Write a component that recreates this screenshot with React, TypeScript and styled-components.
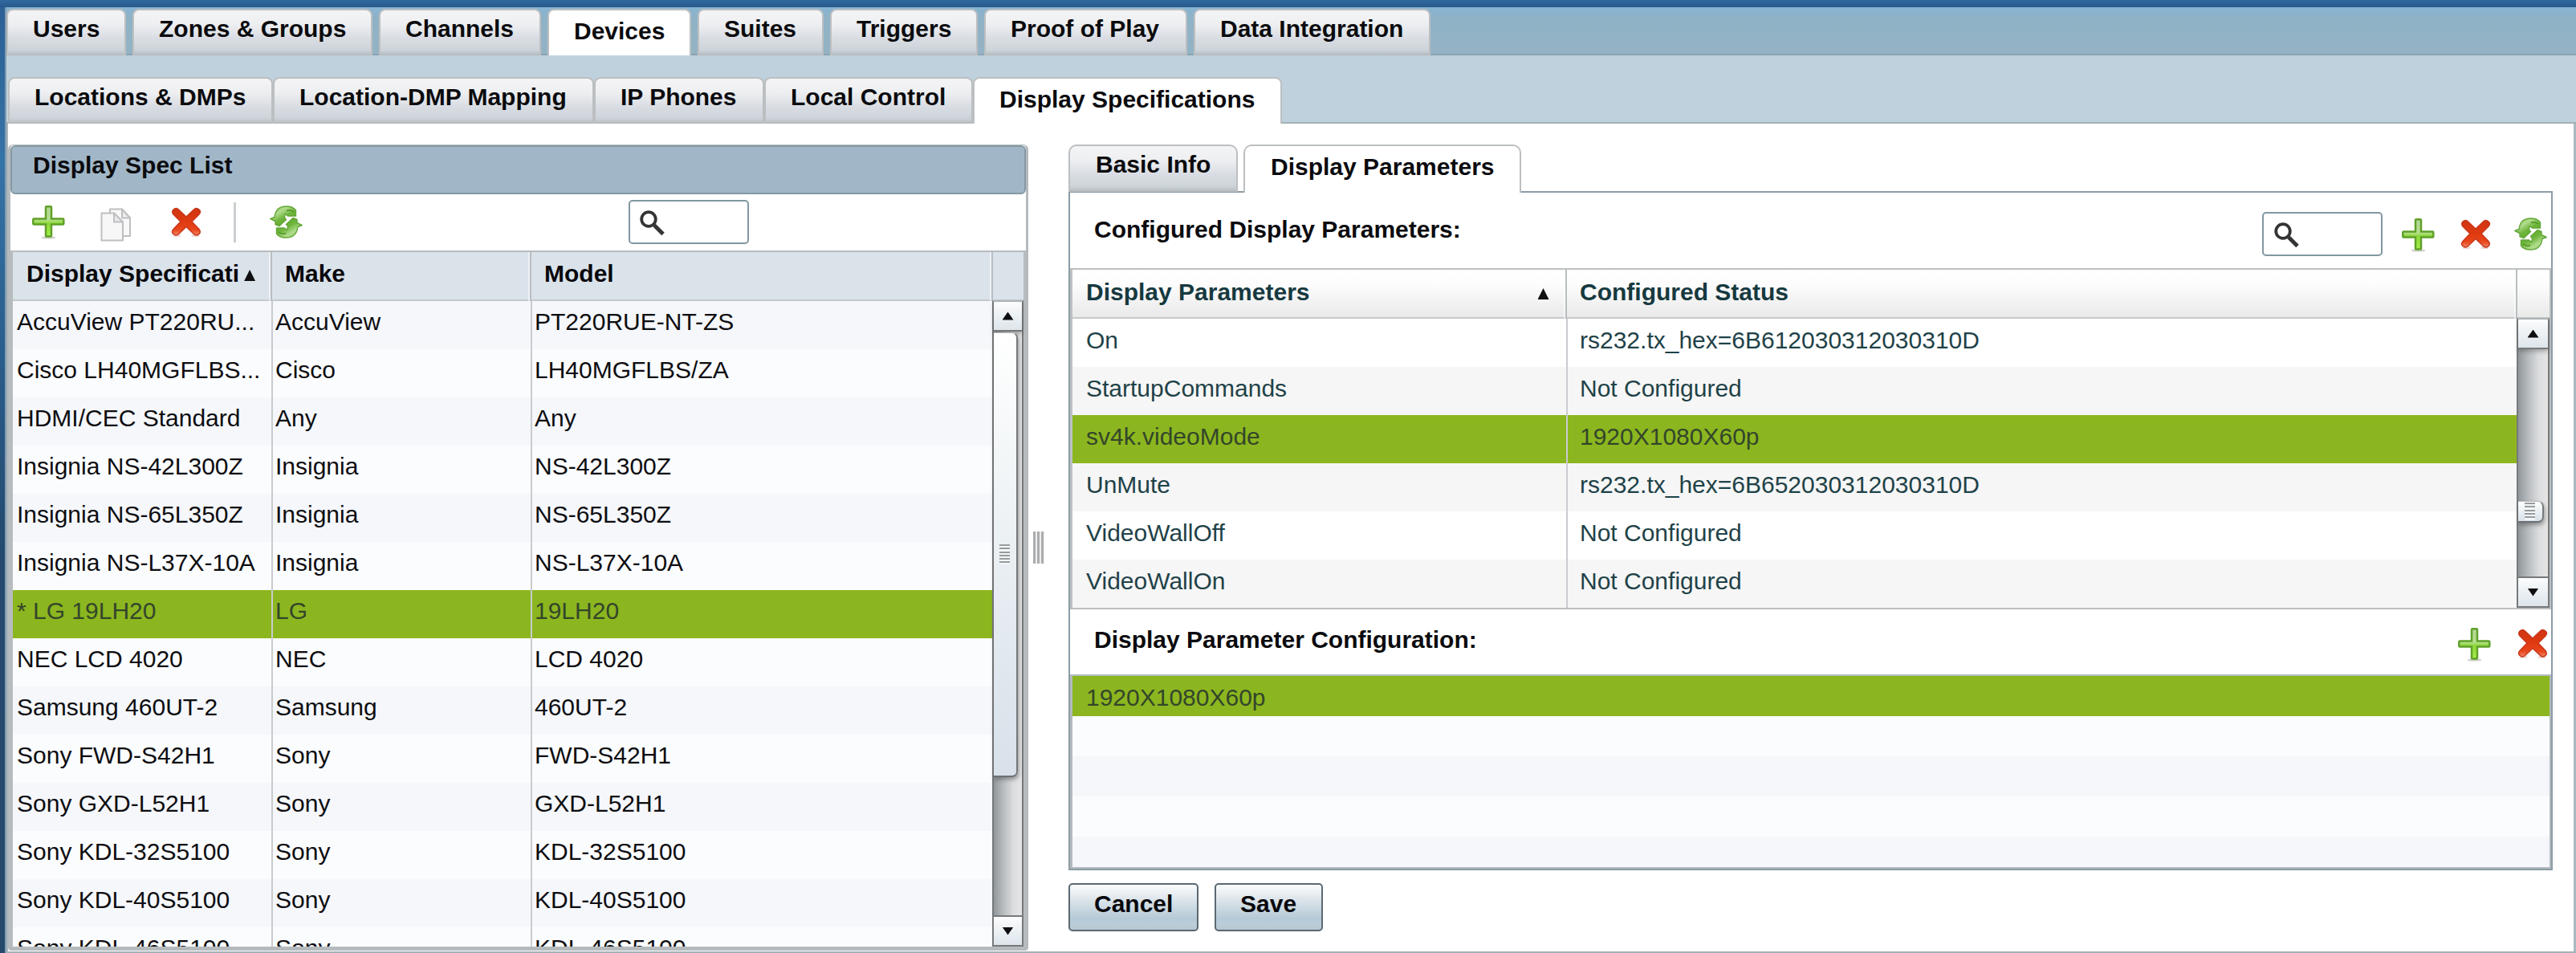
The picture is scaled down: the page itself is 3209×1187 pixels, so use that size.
import React from "react";
import styled, { createGlobalStyle, css } from "styled-components";

const GlobalStyle = createGlobalStyle`
  * { box-sizing: border-box; }
  html, body { margin: 0; padding: 0; }
  body {
    width: 3209px;
    height: 1187px;
    overflow: hidden;
    font-family: "Liberation Sans", Arial, sans-serif;
    font-size: 30px;
    line-height: 34px;
    color: #0b0b0e;
  }
`;

const tabFill = "linear-gradient(#f4f4f6 0%, #eeeff1 30%, #d9dde3 62%, #cdd4d9 88%, #c3cacf 93%, #b2b8bb 100%)";

/* ---------- shell ---------- */
const Shell = styled.div`
  width: 3209px;
  height: 1187px;
  display: flex;
  flex-direction: column;
  background: linear-gradient(#2c5f93 0, #3673a6 200px, #2a5f8e 420px, #24496d 700px, #24496b 100%);
`;
const Banner = styled.div`
  height: 9px;
  background: linear-gradient(#30699f, #28598b);
`;
const Frame = styled.div`
  flex: 1;
  margin-left: 6px;
  display: flex;
  flex-direction: column;
  background: #fff;
  border-left: 2px solid #7f9bb0;
`;
const MainTabs = styled.nav`
  height: 60px;
  display: flex;
  align-items: flex-end;
  gap: 8px;
  border-bottom: 2px solid #8aa3b1;
  background: linear-gradient(#86b4d3 0, #8fb2c6 25%, #94b3c4 100%);
`;
const SubTabs = styled.nav`
  height: 85px;
  display: flex;
  align-items: flex-end;
  padding-left: 2px;
  background: #bfd1dd;
  border-bottom: 2px solid #a3b0b6;
`;
const Tab = styled.div<{ $w: number; $h: number; $on?: boolean }>`
  width: ${(p) => p.$w}px;
  height: ${(p) => p.$h}px;
  margin-bottom: -2px;
  padding: ${(p) => (p.$on ? 9 : 6)}px 0 0 31px;
  border: 2px solid #bcbfc1;
  border-bottom: 0;
  border-radius: 8px 8px 0 0;
  font-weight: bold;
  white-space: nowrap;
  background: ${(p) => (p.$on ? "#fff" : tabFill)};
`;
const Workspace = styled.main`
  flex: 1;
  display: flex;
  padding: 26px 24px 0 0;
  border-left: 2px solid #a9b4ba;
  border-right: 3px solid #a9b9c1;
  border-bottom: 2px solid #a7b1b7;
`;

/* ---------- left panel ---------- */
const SpecPanel = styled.section`
  width: 1271px;
  height: 1004px;
  display: flex;
  flex-direction: column;
  border: 3px solid #b5babd;
  border-top-width: 1px;
  border-bottom-width: 4px;
  border-radius: 6px 6px 4px 4px;
`;
const PanelTitle = styled.div`
  height: 61px;
  padding: 6px 0 0 26px;
  border: 2px solid #8599a4;
  border-radius: 6px;
  background: #a1b7c8;
  font-weight: bold;
`;
const Toolbar = styled.div`
  height: 70px;
  padding: 0 0 0 27px;
  display: flex;
  align-items: flex-start;
`;
const IconSlot = styled.span<{ $top: number; $left?: number }>`
  display: flex;
  margin-top: ${(p) => p.$top}px;
  margin-left: ${(p) => p.$left ?? 0}px;
`;
const ToolDivider = styled.span`
  width: 3px;
  height: 50px;
  margin: 10px 0 0 40px;
  background: #c9cfd1;
`;
const SearchField = styled.div<{ $top: number; $left: number; $pad: number }>`
  width: 150px;
  height: 55px;
  margin: ${(p) => p.$top}px 0 0 ${(p) => p.$left}px;
  padding: 11px 0 0 ${(p) => p.$pad}px;
  border: 2px solid #8297a1;
  border-radius: 5px;
  background: #fff;
`;
const Grid = styled.div`
  flex: 1;
  min-height: 0;
  display: flex;
  flex-direction: column;
  border: 3px solid #b7bcbf;
  border-top-width: 2px;
  border-bottom-width: 1px;
`;
const GridHead = styled.div<{ $tone: "blue" | "gray" }>`
  flex: none;
  display: flex;
  height: 61px;
  border-bottom: 2px solid #c5c9cb;
  background: ${(p) =>
    p.$tone === "blue" ? "#dae2ea" : "linear-gradient(#ffffff 0, #fdfdfd 30%, #e9e9e9 100%)"};
  color: ${(p) => (p.$tone === "blue" ? "#08080b" : "#16393f")};
  font-weight: bold;
`;
const HeadCell = styled.div<{ $w: number; $pad: number; $top: number; $last?: boolean }>`
  width: ${(p) => p.$w}px;
  height: 61px;
  padding: ${(p) => p.$top}px 0 0 ${(p) => p.$pad}px;
  display: flex;
  white-space: nowrap;
  ${(p) => !p.$last && css`
    border-right: 2px solid #b9bec1;
    box-shadow: inset -2px 0 0 rgba(255, 255, 255, 0.55);
  `}
`;
const SortMark = styled.span<{ $top: number; $left: number }>`
  width: 14px;
  height: 14px;
  margin: ${(p) => p.$top}px 0 0 ${(p) => p.$left}px;
  background: #101012;
  clip-path: polygon(50% 0, 100% 100%, 0 100%);
`;
const GridBody = styled.div`
  flex: 1;
  min-height: 0;
  display: flex;
`;
const Rows = styled.div`
  flex: 1;
  overflow: hidden;
`;
const Row = styled.div<{ $bg: string; $ink: string; $h?: number }>`
  display: flex;
  height: ${(p) => p.$h ?? 60}px;
  background: ${(p) => p.$bg};
  color: ${(p) => p.$ink};
`;
const Cell = styled.div<{ $w?: number; $pad: number; $top?: number }>`
  ${(p) => (p.$w ? `width: ${p.$w}px; border-right: 2px solid #c9cccf;` : "flex: 1;")}
  padding: ${(p) => p.$top ?? 9}px 0 0 ${(p) => p.$pad}px;
  white-space: nowrap;
`;

/* ---------- scroll bar ---------- */
const ScrollBar = styled.div<{ $w: number }>`
  width: ${(p) => p.$w}px;
  margin-top: -1px;
  display: flex;
  flex-direction: column;
  border: 2px solid #77797b;
  border-top-color: #b3b6b8;
  background: linear-gradient(90deg, #90979b 0, #b9bdc0 35%, #dcdddf 70%, #e6e5e6 100%);
`;
const ArrowButton = styled.div<{ $down?: boolean }>`
  height: 37px;
  display: flex;
  align-items: center;
  justify-content: center;
  background: linear-gradient(#fbfcfd, #dde5eb);
  ${(p) => (p.$down ? "border-top: 2px solid #77797b;" : "border-bottom: 2px solid #77797b; box-shadow: 0 3px 5px rgba(60,60,60,.35);")}
  &::after {
    content: "";
    width: 14px;
    height: 10px;
    background: #0e0e10;
    clip-path: ${(p) => (p.$down ? "polygon(0 0, 100% 0, 50% 100%)" : "polygon(50% 0, 100% 100%, 0 100%)")};
  }
`;
const Track = styled.div<{ $before: number }>`
  flex: 1;
  padding: ${(p) => p.$before}px 5px 0 0;
`;
const Thumb = styled.div<{ $h: number }>`
  height: ${(p) => p.$h}px;
  display: flex;
  align-items: center;
  justify-content: center;
  border-right: 2px solid #77797b;
  border-bottom: 2px solid #6c7074;
  border-top: 1px solid #b5b8ba;
  border-radius: 0 7px 7px 0;
  background: linear-gradient(#ffffff 0, #f0f4f6 35%, #e2e9ef 70%, #d8e1ea 100%);
  box-shadow: 1px 3px 5px rgba(60, 60, 60, 0.45);
`;
const ThumbGrip = styled.span<{ $n: number }>`
  width: 13px;
  height: ${(p) => p.$n * 4.3}px;
  margin-right: 1px;
  background: repeating-linear-gradient(#999c9e 0 2px, #f3f6f7 2px 4.3px);
`;

/* ---------- splitter ---------- */
const Splitter = styled.div`
  width: 50px;
  padding: 482px 0 0 6px;
`;
const SplitGrip = styled.div`
  width: 14px;
  height: 40px;
  background: repeating-linear-gradient(90deg, #abadaf 0 3px, #eeeeef 3px 5px);
`;

/* ---------- right side ---------- */
const Detail = styled.section`
  width: 1849px;
  display: flex;
  flex-direction: column;
`;
const DetailTabs = styled.nav`
  position: relative;
  z-index: 1;
  height: 58px;
  display: flex;
  align-items: flex-start;
`;
const DetailTab = styled(Tab)`
  margin: 0 7px -2px 0;
  border-radius: 10px 10px 0 0;
  padding-left: 32px;
  flex: none;
`;
const DetailBox = styled.div`
  height: 846px;
  display: flex;
  flex-direction: column;
  border: 2px solid #8c9ca5;
`;
const Section = styled.div<{ $h: number; $text: number }>`
  height: ${(p) => p.$h}px;
  flex: none;
  display: flex;
  align-items: flex-start;
  padding-left: 30px;
  & > h2 {
    flex: 1;
    margin: ${(p) => p.$text}px 0 0;
    font-size: 30px;
    font-weight: bold;
    white-space: nowrap;
  }
`;
const ParamGrid = styled.div`
  height: 425px;
  flex: none;
  display: flex;
  flex-direction: column;
  border: 2px solid #bcc0c2;
  border-left-width: 3px;
`;
const ConfigList = styled.div`
  flex: 1;
  min-height: 0;
  overflow: hidden;
  border: 2px solid #b3babd;
  border-left-width: 3px;
`;
const Buttons = styled.div`
  display: flex;
  gap: 20px;
  padding-top: 16px;
`;
const PushButton = styled.button<{ $w: number }>`
  width: ${(p) => p.$w}px;
  height: 60px;
  padding: 7px 0 0 30px;
  display: flex;
  align-items: flex-start;
  border: 2px solid #5b6972;
  border-radius: 5px;
  background: linear-gradient(#fbfcfd 0, #dfe7ec 30%, #b5c9d7 76%, #bccdd8 88%, #b7c6d0 100%);
  font: bold 30px/34px "Liberation Sans", Arial, sans-serif;
  color: #08080b;
`;

/* ---------- icons ---------- */
const PlusIcon = () => (
  <svg width="41" height="42" viewBox="0 0 41 42">
    <defs>
      <linearGradient id="plusFill" x1="0" y1="0" x2="0" y2="1">
        <stop offset="0" stopColor="#b4d795" />
        <stop offset="0.45" stopColor="#b4e08c" />
        <stop offset="0.55" stopColor="#8ed83a" />
        <stop offset="1" stopColor="#a0ee48" />
      </linearGradient>
    </defs>
    <ellipse cx="20.5" cy="40" rx="9" ry="1.6" fill="#cfd0cc" />
    <path
      d="M18 1.300h5q1 0 1 1V16.500h14.300q1 0 1 1v5q0 1-1 1H24V37.500q0 1-1 1h-5q-1 0-1-1V23.500H2.300q-1 0-1-1v-5q0-1 1-1H17V2.300q0-1 1-1z"
      fill="url(#plusFill)"
      stroke="#60a02a"
      strokeWidth="2.500"
    />
  </svg>
);

const CopyIcon = () => (
  <svg width="39" height="42" viewBox="0 0 39 42">
    <g stroke="#bfbfc1" strokeWidth="2" strokeLinejoin="round">
      <path d="M12 1.500h15l10 11V35H12z" fill="#f8f8f9" />
      <path d="M27 1.500v11h10z" fill="#ececee" />
      <path d="M1.500 6.500H17l11 11V40.500H1.500z" fill="#f7f7f8" />
      <path d="M17 6.500v11h11z" fill="#e9e9eb" />
    </g>
  </svg>
);

const DeleteIcon = () => (
  <svg width="38" height="38" viewBox="0 0 38 38">
    <defs>
      <linearGradient id="crossFill" x1="0" y1="0" x2="0" y2="1">
        <stop offset="0" stopColor="#cf3512" />
        <stop offset="0.5" stopColor="#e03a10" />
        <stop offset="0.8" stopColor="#e8461c" />
        <stop offset="1" stopColor="#f28a6c" />
      </linearGradient>
    </defs>
    <path d="M3 35.500h9M26 35.500h9" stroke="#ecdcd8" strokeWidth="3" />
    <path
      d="M3 3Q6 .5 9 2.500L19 12 29 2.500Q32 .5 35 3T35 9L26 18 35 27.500Q37.500 31 35 33.500T29 34L19 24.500 9 34Q6 36 3 33.500T3 27.500L12 18 3 9Q.5 6 3 3z"
      fill="url(#crossFill)"
      stroke="#c8371a"
      strokeWidth="1.500"
    />
  </svg>
);

const swirl = "M.8 16.500 6 14.500C7 6 12 1 20.500 1 26 1 30 2.500 32.500 6V13H22.500L19.500 10.500C18.800 12 18.600 13.500 18.600 15.500L20.500 17.500 12 25.500 7 23.500V19.500Z";
const RefreshIcon = () => (
  <svg width="41" height="41" viewBox="0 0 41 41">
    <defs>
      <linearGradient id="swirlFill" x1="0.1" y1="0" x2="0.9" y2="1">
        <stop offset="0" stopColor="#8cc763" />
        <stop offset="0.3" stopColor="#b0dc8c" />
        <stop offset="0.55" stopColor="#6fb53c" />
        <stop offset="1" stopColor="#57a526" />
      </linearGradient>
    </defs>
    <g fill="url(#swirlFill)" stroke="#62a637" strokeWidth="1.400" strokeLinejoin="round">
      <path d={swirl} />
      <path d={swirl} transform="rotate(180 20.500 20.500)" />
    </g>
    <path d="M21 6.500q5-2 9 1.500M20 34.500q-5 2-9-1.500" fill="none" stroke="#4f9424" strokeWidth="1.500" />
  </svg>
);

const SearchIcon = () => (
  <svg width="32" height="32" viewBox="0 0 32 32">
    <circle cx="11" cy="11" r="8.800" fill="none" stroke="#343436" strokeWidth="3.800" />
    <path d="M18 18.500L29 29.500" stroke="#343436" strokeWidth="5" />
  </svg>
);

/* ---------- data ---------- */
const mainTabs: [string, number, boolean?][] = [
  ["Users", 149], ["Zones & Groups", 299], ["Channels", 202], ["Devices", 179, true],
  ["Suites", 157], ["Triggers", 184], ["Proof of Play", 253], ["Data Integration", 295],
];
const subTabs: [string, number, boolean?][] = [
  ["Locations & DMPs", 330], ["Location-DMP Mapping", 400], ["IP Phones", 212],
  ["Local Control", 260], ["Display Specifications", 385, true],
];
const specs: [string, string, string][] = [
  ["AccuView PT220RU...", "AccuView", "PT220RUE-NT-ZS"],
  ["Cisco LH40MGFLBS...", "Cisco", "LH40MGFLBS/ZA"],
  ["HDMI/CEC Standard", "Any", "Any"],
  ["Insignia NS-42L300Z", "Insignia", "NS-42L300Z"],
  ["Insignia NS-65L350Z", "Insignia", "NS-65L350Z"],
  ["Insignia NS-L37X-10A", "Insignia", "NS-L37X-10A"],
  ["* LG 19LH20", "LG", "19LH20"],
  ["NEC LCD 4020", "NEC", "LCD 4020"],
  ["Samsung 460UT-2", "Samsung", "460UT-2"],
  ["Sony FWD-S42H1", "Sony", "FWD-S42H1"],
  ["Sony GXD-L52H1", "Sony", "GXD-L52H1"],
  ["Sony KDL-32S5100", "Sony", "KDL-32S5100"],
  ["Sony KDL-40S5100", "Sony", "KDL-40S5100"],
  ["Sony KDL-46S5100", "Sony", "KDL-46S5100"],
];
const params: [string, string][] = [
  ["On", "rs232.tx_hex=6B612030312030310D"],
  ["StartupCommands", "Not Configured"],
  ["sv4k.videoMode", "1920X1080X60p"],
  ["UnMute", "rs232.tx_hex=6B652030312030310D"],
  ["VideoWallOff", "Not Configured"],
  ["VideoWallOn", "Not Configured"],
];
const configs = ["1920X1080X60p", "", "", "", ""];

const green = "#8cb61f";
const greenInk = "#33462a";

export default function App() {
  return (
    <>
      <GlobalStyle />
      <Shell>
        <Banner />
        <Frame>
          <MainTabs>
            {mainTabs.map(([label, w, on]) => (
              <Tab key={label} $w={w} $h={58} $on={on}>{label}</Tab>
            ))}
          </MainTabs>
          <SubTabs>
            {subTabs.map(([label, w, on]) => (
              <Tab key={label} $w={w} $h={58} $on={on}>{label}</Tab>
            ))}
          </SubTabs>
          <Workspace>
            <SpecPanel>
              <PanelTitle>Display Spec List</PanelTitle>
              <Toolbar>
                <IconSlot $top={14}><PlusIcon /></IconSlot>
                <IconSlot $top={17} $left={44}><CopyIcon /></IconSlot>
                <IconSlot $top={16} $left={49}><DeleteIcon /></IconSlot>
                <ToolDivider />
                <IconSlot $top={14} $left={42}><RefreshIcon /></IconSlot>
                <SearchField $top={7} $left={406} $pad={12}><SearchIcon /></SearchField>
              </Toolbar>
              <Grid>
                <GridHead $tone="blue">
                  <HeadCell $w={323} $pad={17} $top={10}>
                    Display Specificati<SortMark $top={12} $left={6} />
                  </HeadCell>
                  <HeadCell $w={323} $pad={16} $top={10}>Make</HeadCell>
                  <HeadCell $w={575} $pad={16} $top={10}>Model</HeadCell>
                </GridHead>
                <GridBody>
                  <Rows>
                    {specs.map(([name, make, model], i) => (
                      <Row
                        key={name}
                        $bg={i === 6 ? green : i % 2 ? "#fbfcfe" : "#f5f7fb"}
                        $ink={i === 6 ? greenInk : "#0d0d10"}
                      >
                        <Cell $w={324} $pad={5}>{name}</Cell>
                        <Cell $w={323} $pad={3}>{make}</Cell>
                        <Cell $pad={3}>{model}</Cell>
                      </Row>
                    ))}
                  </Rows>
                  <ScrollBar $w={39}>
                    <ArrowButton />
                    <Track $before={1}>
                      <Thumb $h={554}><ThumbGrip $n={6} /></Thumb>
                    </Track>
                    <ArrowButton $down />
                  </ScrollBar>
                </GridBody>
              </Grid>
            </SpecPanel>
            <Splitter><SplitGrip /></Splitter>
            <Detail>
              <DetailTabs>
                <DetailTab $w={211} $h={59}>Basic Info</DetailTab>
                <DetailTab $w={346} $h={60} $on>Display Parameters</DetailTab>
              </DetailTabs>
              <DetailBox>
                <Section $h={94} $text={29}>
                  <h2>Configured Display Parameters:</h2>
                  <SearchField $top={24} $left={0} $pad={13}><SearchIcon /></SearchField>
                  <IconSlot $top={32} $left={24}><PlusIcon /></IconSlot>
                  <IconSlot $top={33} $left={32}><DeleteIcon /></IconSlot>
                  <IconSlot $top={31} $left={29}><RefreshIcon /></IconSlot>
                  <IconSlot $top={0} $left={5} />
                </Section>
                <ParamGrid>
                  <GridHead $tone="gray">
                    <HeadCell $w={616} $pad={17} $top={11}>
                      Display Parameters<SortMark $top={12} $left={284} />
                    </HeadCell>
                    <HeadCell $w={1184} $pad={16} $top={11}>Configured Status</HeadCell>
                  </GridHead>
                  <GridBody>
                    <Rows>
                      {params.map(([name, status], i) => (
                        <Row
                          key={name}
                          $bg={i === 2 ? green : i % 2 ? "#f6f6f6" : "#ffffff"}
                          $ink={i === 2 ? greenInk : "#1f4248"}
                        >
                          <Cell $w={617} $pad={17} $top={10}>{name}</Cell>
                          <Cell $pad={15} $top={10}>{status}</Cell>
                        </Row>
                      ))}
                    </Rows>
                    <ScrollBar $w={41}>
                      <ArrowButton />
                      <Track $before={189}>
                        <Thumb $h={27}><ThumbGrip $n={5} /></Thumb>
                      </Track>
                      <ArrowButton $down />
                    </ScrollBar>
                  </GridBody>
                </ParamGrid>
                <Section $h={81} $text={21}>
                  <h2>Display Parameter Configuration:</h2>
                  <IconSlot $top={23}><PlusIcon /></IconSlot>
                  <IconSlot $top={24} $left={33}><DeleteIcon /></IconSlot>
                  <IconSlot $top={0} $left={4} />
                </Section>
                <ConfigList>
                  {configs.map((value, i) => (
                    <Row
                      key={i}
                      $h={50}
                      $bg={i === 0 ? green : i % 2 ? "#fbfcfe" : "#f5f7fb"}
                      $ink={greenInk}
                    >
                      <Cell $pad={17} $top={10}>{value}</Cell>
                    </Row>
                  ))}
                </ConfigList>
              </DetailBox>
              <Buttons>
                <PushButton $w={162}>Cancel</PushButton>
                <PushButton $w={135}>Save</PushButton>
              </Buttons>
            </Detail>
          </Workspace>
        </Frame>
      </Shell>
    </>
  );
}
